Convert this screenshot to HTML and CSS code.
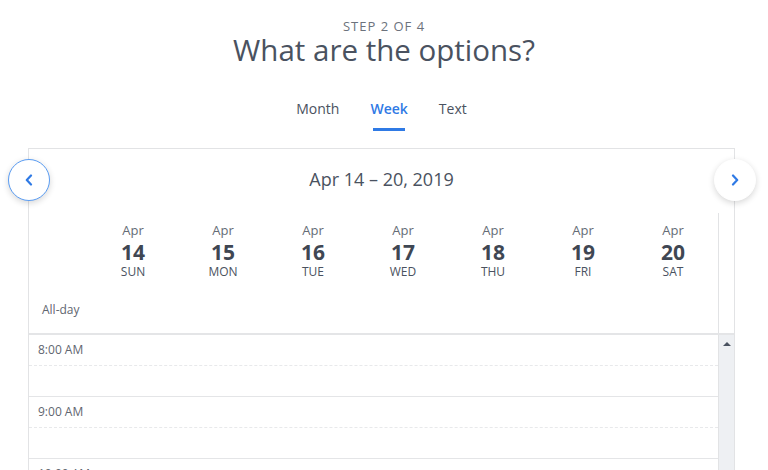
FILE: index.html
```html
<!DOCTYPE html>
<html lang="en">
<head>
<meta charset="utf-8">
<title>What are the options?</title>
<link rel="stylesheet" href="styles.css">
</head>
<body>
<header class="intro">
  <div class="step">STEP 2 OF 4</div>
  <h1 class="title">What are the options?</h1>
</header>
<nav class="tabs">
  <span class="tab">Month</span>
  <span class="tab active">Week</span>
  <span class="tab">Text</span>
</nav>
<section class="card">
  <button class="nav-btn prev" aria-label="Previous week">
    <svg width="10" height="12" viewBox="0 0 10 12"><path d="M7 1.5 L2.8 6 L7 10.5" fill="none" stroke="currentColor" stroke-width="2.2" stroke-linecap="round" stroke-linejoin="round"/></svg>
  </button>
  <button class="nav-btn next" aria-label="Next week">
    <svg width="10" height="12" viewBox="0 0 10 12"><path d="M3 1.5 L7.2 6 L3 10.5" fill="none" stroke="currentColor" stroke-width="2.2" stroke-linecap="round" stroke-linejoin="round"/></svg>
  </button>
  <div class="range">Apr 14 – 20, 2019</div>
  <div class="head">
    <div class="gutter">
      <span class="allday">All-day</span>
    </div>
    <div class="days">
      <div class="day"><span class="mon">Apr</span><span class="num">14</span><span class="dow">SUN</span></div>
      <div class="day"><span class="mon">Apr</span><span class="num">15</span><span class="dow">MON</span></div>
      <div class="day"><span class="mon">Apr</span><span class="num">16</span><span class="dow">TUE</span></div>
      <div class="day"><span class="mon">Apr</span><span class="num">17</span><span class="dow">WED</span></div>
      <div class="day"><span class="mon">Apr</span><span class="num">18</span><span class="dow">THU</span></div>
      <div class="day"><span class="mon">Apr</span><span class="num">19</span><span class="dow">FRI</span></div>
      <div class="day"><span class="mon">Apr</span><span class="num">20</span><span class="dow">SAT</span></div>
    </div>
    <div class="head-spacer"></div>
  </div>
  <div class="body">
    <div class="slots">
      <div class="slot hour"><span class="time">8:00 AM</span></div>
      <div class="slot half"></div>
      <div class="slot hour"><span class="time">9:00 AM</span></div>
      <div class="slot half"></div>
      <div class="slot hour"><span class="time">10:00 AM</span></div>
      <div class="slot half"></div>
    </div>
    <div class="scrollbar"><span class="arrow"></span></div>
  </div>
</section>
</body>
</html>
```
FILE: styles.css
```css
* { box-sizing: border-box; }
html, body { margin: 0; padding: 0; background: #fff; }
body {
  font-family: "Open Sans", "Noto Sans", "Liberation Sans", sans-serif;
  color: #4a5260;
  height: 470px;
  overflow: hidden;
}
.intro { text-align: center; padding-top: 19px; }
.step {
  font-size: 13px;
  line-height: 14px;
  letter-spacing: 1px;
  color: #6c727c;
}
.title {
  margin: 0;
  font-size: 29.5px;
  font-weight: 400;
  line-height: 34px;
  color: #4a5260;
}
.tabs {
  display: flex;
  justify-content: center;
  gap: 31px;
  margin-top: 32px;
  padding-right: 5px;
}
.tab {
  font-size: 14px;
  line-height: 20px;
  padding-bottom: 9px;
  color: #4a5260;
  border-bottom: 3px solid transparent;
}
.tab.active {
  color: #2f7ae5;
  font-weight: 600;
  border-bottom-color: #2f7ae5;
  border-image: linear-gradient(to right, transparent 4px, #2f7ae5 4px, #2f7ae5 calc(100% - 4px), transparent calc(100% - 4px)) 1;
}
.card {
  position: relative;
  margin: 17px 33px 0 28px;
  border: 1px solid #e2e3e5;
  border-bottom: none;
  height: 330px;
}
.nav-btn {
  position: absolute;
  top: 10px;
  width: 42px;
  height: 42px;
  border-radius: 50%;
  background: #fff;
  border: 1px solid #fff;
  box-shadow: 0 2px 6px rgba(0, 0, 0, 0.16);
  color: #2f7ae5;
  display: flex;
  align-items: center;
  justify-content: center;
  padding: 0;
}
.nav-btn.prev { left: -21px; border-color: #5a9cf2; }
.nav-btn.next { right: -22px; }
.range {
  text-align: center;
  font-size: 18px;
  line-height: 24px;
  padding: 18px 0 22px;
  color: #4a5260;
}
.head {
  display: flex;
  height: 122px;
  border-bottom: 2px solid #e4e5e7;
}
.gutter {
  width: 59px;
  display: flex;
  align-items: flex-end;
  padding: 0 0 15px 13px;
}
.allday { font-size: 12px; line-height: 16px; color: #5f6670; }
.days {
  display: grid;
  grid-template-columns: repeat(7, 90px);
  border-right: 1px solid #e2e3e5;
}
.day {
  display: flex;
  flex-direction: column;
  align-items: center;
  padding-top: 10px;
}
.mon { font-size: 13px; line-height: 14px; color: #656c76; }
.num { font-size: 21px; line-height: 21px; font-weight: 700; color: #3f4753; margin-top: 5px; }
.dow { font-size: 12px; line-height: 13px; color: #4a5260; margin-top: 2px; }
.head-spacer { flex: 1; }
.body { display: flex; }
.slots { flex: 1; }
.slot {
  height: 31px;
  padding-left: 9px;
}
.slot.hour { border-bottom: 1px dashed #e8e9eb; }
.slot.half { border-bottom: 1px solid #e4e5e7; }
.time {
  display: block;
  font-size: 12px;
  line-height: 16px;
  padding-top: 7px;
  color: #5f6670;
}
.scrollbar {
  width: 16px;
  background: #eef0f3;
  border-left: 1px solid #e2e3e5;
  display: flex;
  justify-content: center;
  padding-top: 7px;
}
.arrow {
  width: 0;
  height: 0;
  border-left: 4px solid transparent;
  border-right: 4px solid transparent;
  border-bottom: 4px solid #4a5260;
}
```
